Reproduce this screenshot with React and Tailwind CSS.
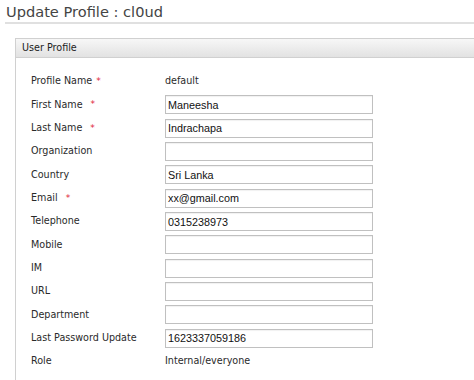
import React from "react";

const rows = [
  { label: "Profile Name", req: "near", text: "default" },
  { label: "First Name", req: "far", input: "Maneesha" },
  { label: "Last Name", req: "far", input: "Indrachapa" },
  { label: "Organization", input: "" },
  { label: "Country", input: "Sri Lanka" },
  { label: "Email", req: "far", input: "xx@gmail.com" },
  { label: "Telephone", input: "0315238973" },
  { label: "Mobile", input: "" },
  { label: "IM", input: "" },
  { label: "URL", input: "" },
  { label: "Department", input: "" },
  { label: "Last Password Update", input: "1623337059186" },
  { label: "Role", text: "Internal/everyone" },
];

export default function App() {
  return (
    <div
      className="w-[474px] h-[380px] overflow-hidden bg-white text-[#333]"
      style={{ fontFamily: '"DejaVu Sans", sans-serif' }}
    >
      <div className="pl-[6px] pt-[3px] h-[22px] text-[14.6px] leading-[18px] text-[#444]">
        Update Profile : cl0ud
      </div>
      <div className="ml-[5px] h-[2px] bg-[#e0e0e0]" />
      <div className="ml-[15px] mt-[14px] w-[520px] border border-[#d0d0d0] h-[360px]">
        <div className="h-[19px] pl-[6px] flex items-center text-[9.6px] text-[#222] bg-gradient-to-b from-[#f7f7f7] to-[#e2e2e2] border-b border-[#d0d0d0]">
          User Profile
        </div>
        <div className="pt-[12px] pl-[15px]">
          {rows.map((r) => (
            <div key={r.label} className="flex items-center h-[23.33px]">
              <div className="w-[134px] text-[9.6px] flex items-center text-[#2a2a2a]">
                <span>{r.label}</span>
                {r.req === "near" && (
                  <span className="text-[#e0243a] ml-[4px] text-[9px]">*</span>
                )}
                {r.req === "far" && (
                  <span className="text-[#e0243a] ml-[8px] text-[9px]">*</span>
                )}
              </div>
              {r.text !== undefined ? (
                <div className="text-[9.6px] text-[#2a2a2a]">{r.text}</div>
              ) : (
                <div
                  className="w-[208px] h-[19px] border border-[#c0c0c0] bg-white flex items-center pl-[2px] text-[10.8px] text-[#111] shadow-[inset_0_1px_1px_rgba(0,0,0,0.06)]"
                  style={{ fontFamily: '"Liberation Sans", Arial, sans-serif' }}
                >
                  {r.input}
                </div>
              )}
            </div>
          ))}
        </div>
      </div>
    </div>
  );
}
